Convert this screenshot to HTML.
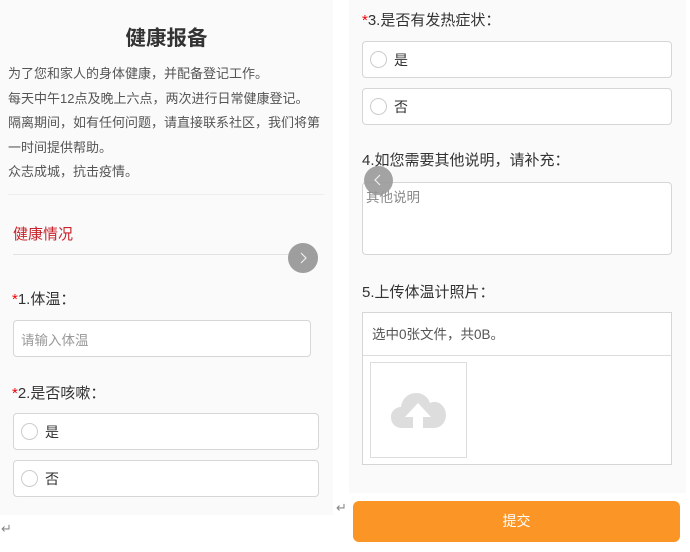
<!DOCTYPE html>
<html><head><meta charset="utf-8"><style>
*{margin:0;padding:0;box-sizing:border-box}
body{width:690px;height:552px;background:#fff;position:relative;overflow:hidden;font-family:"Liberation Sans","Noto Sans CJK SC",sans-serif;color:#333}
.a{position:absolute;white-space:nowrap}
.p{position:absolute;background:#fafafa}
.box{position:absolute;background:#fff;border:1px solid #d6d6d6;border-radius:4px}
.q{font-size:15px;color:#333}
.q b{color:#e00;font-weight:normal}
.r{position:absolute;width:17px;height:17px;border:1px solid #ccc;border-radius:50%;left:7px;top:9px}
.opt{font-size:14px;color:#333;position:absolute;left:31px;top:8px}
.circ{position:absolute;border-radius:50%;background:#999;opacity:.95}
</style></head><body>
<div class="p" style="left:0;top:0;width:333px;height:515px"></div>
<div class="p" style="left:349px;top:0;width:337px;height:493px"></div>

<div class="a" style="left:0;width:333px;text-align:center;top:21px;font-size:20.5px;font-weight:bold;color:#333">健康报备</div>
<div class="a" style="left:8px;top:62px;font-size:13px;color:#555;line-height:24.5px">为了您和家人的身体健康，并配备登记工作。<br>每天中午12点及晚上六点，两次进行日常健康登记。<br>隔离期间，如有任何问题，请直接联系社区，我们将第<br>一时间提供帮助。<br>众志成城，抗击疫情。</div>
<div class="a" style="left:8px;top:194px;width:316px;height:1px;background:#eee"></div>
<div class="a" style="left:13px;top:223px;font-size:15px;color:#c8232c">健康情况</div>
<div class="a" style="left:13px;top:254px;width:305px;height:1px;background:#e2e2e2"></div>
<div class="circ" style="left:288px;top:243px;width:30px;height:30px"></div>
<svg class="a" style="left:297px;top:251px" width="12" height="14"><path d="M4 2L9 7L4 12" stroke="#eee" stroke-width="1.2" fill="none"/></svg>

<div class="a q" style="left:12px;top:288px"><b>*</b>1.体温：</div>
<div class="box" style="left:13px;top:320px;width:298px;height:37px"><span style="position:absolute;left:7px;top:8px;font-size:13.5px;color:#999">请输入体温</span></div>
<div class="a q" style="left:12px;top:382px"><b>*</b>2.是否咳嗽：</div>
<div class="box" style="left:13px;top:413px;width:306px;height:37px"><div class="r"></div><span class="opt">是</span></div>
<div class="box" style="left:13px;top:460px;width:306px;height:37px"><div class="r"></div><span class="opt">否</span></div>
<div class="a" style="left:1px;top:521px;font-size:13px;color:#888">↵</div>
<div class="a" style="left:336px;top:500px;font-size:13px;color:#888">↵</div>

<div class="a q" style="left:362px;top:9px"><b>*</b>3.是否有发热症状：</div>
<div class="box" style="left:362px;top:41px;width:310px;height:37px"><div class="r"></div><span class="opt">是</span></div>
<div class="box" style="left:362px;top:88px;width:310px;height:37px"><div class="r"></div><span class="opt">否</span></div>
<div class="a q" style="left:362px;top:149px">4.如您需要其他说明，请补充：</div>
<div class="box" style="left:362px;top:182px;width:310px;height:73px"><span style="position:absolute;left:3px;top:3px;font-size:13.5px;color:#888">其他说明</span></div>
<div class="circ" style="left:364px;top:166px;width:29px;height:29px;opacity:.9"></div>
<svg class="a" style="left:372px;top:173px" width="12" height="14"><path d="M8 2L3 7L8 12" stroke="#eee" stroke-width="1.2" fill="none"/></svg>
<div class="a q" style="left:362px;top:281px">5.上传体温计照片：</div>
<div class="a" style="left:362px;top:312px;width:310px;height:153px;background:#fff;border:1px solid #d6d6d6"></div>
<div class="a" style="left:363px;top:355px;width:308px;height:1px;background:#ddd"></div>
<div class="a" style="left:372px;top:323px;font-size:13.5px;color:#555">选中0张文件，共0B。</div>
<div class="a" style="left:370px;top:362px;width:97px;height:96px;border:1px solid #ddd;background:#fff"></div>
<svg class="a" style="left:390px;top:390px" width="57" height="40" viewBox="0 0 57 40">
<path d="M12 38C5 38 1 33 1 27C1 21 6 17 11 17C12 9 18 3 26 3C33 3 38 7 40 13C42 12 44 12 46 12C52 13 56 19 56 25C56 32 51 38 44 38Z" fill="#ddd"/>
<path d="M28 13L15 27H23V40H33V27H41Z" fill="#fff"/>
</svg>
<div class="a" style="left:353px;top:501px;width:327px;height:41px;background:#fb9526;border-radius:6px;color:#fff;font-size:14px;text-align:center;line-height:41px">提交</div>
</body></html>
